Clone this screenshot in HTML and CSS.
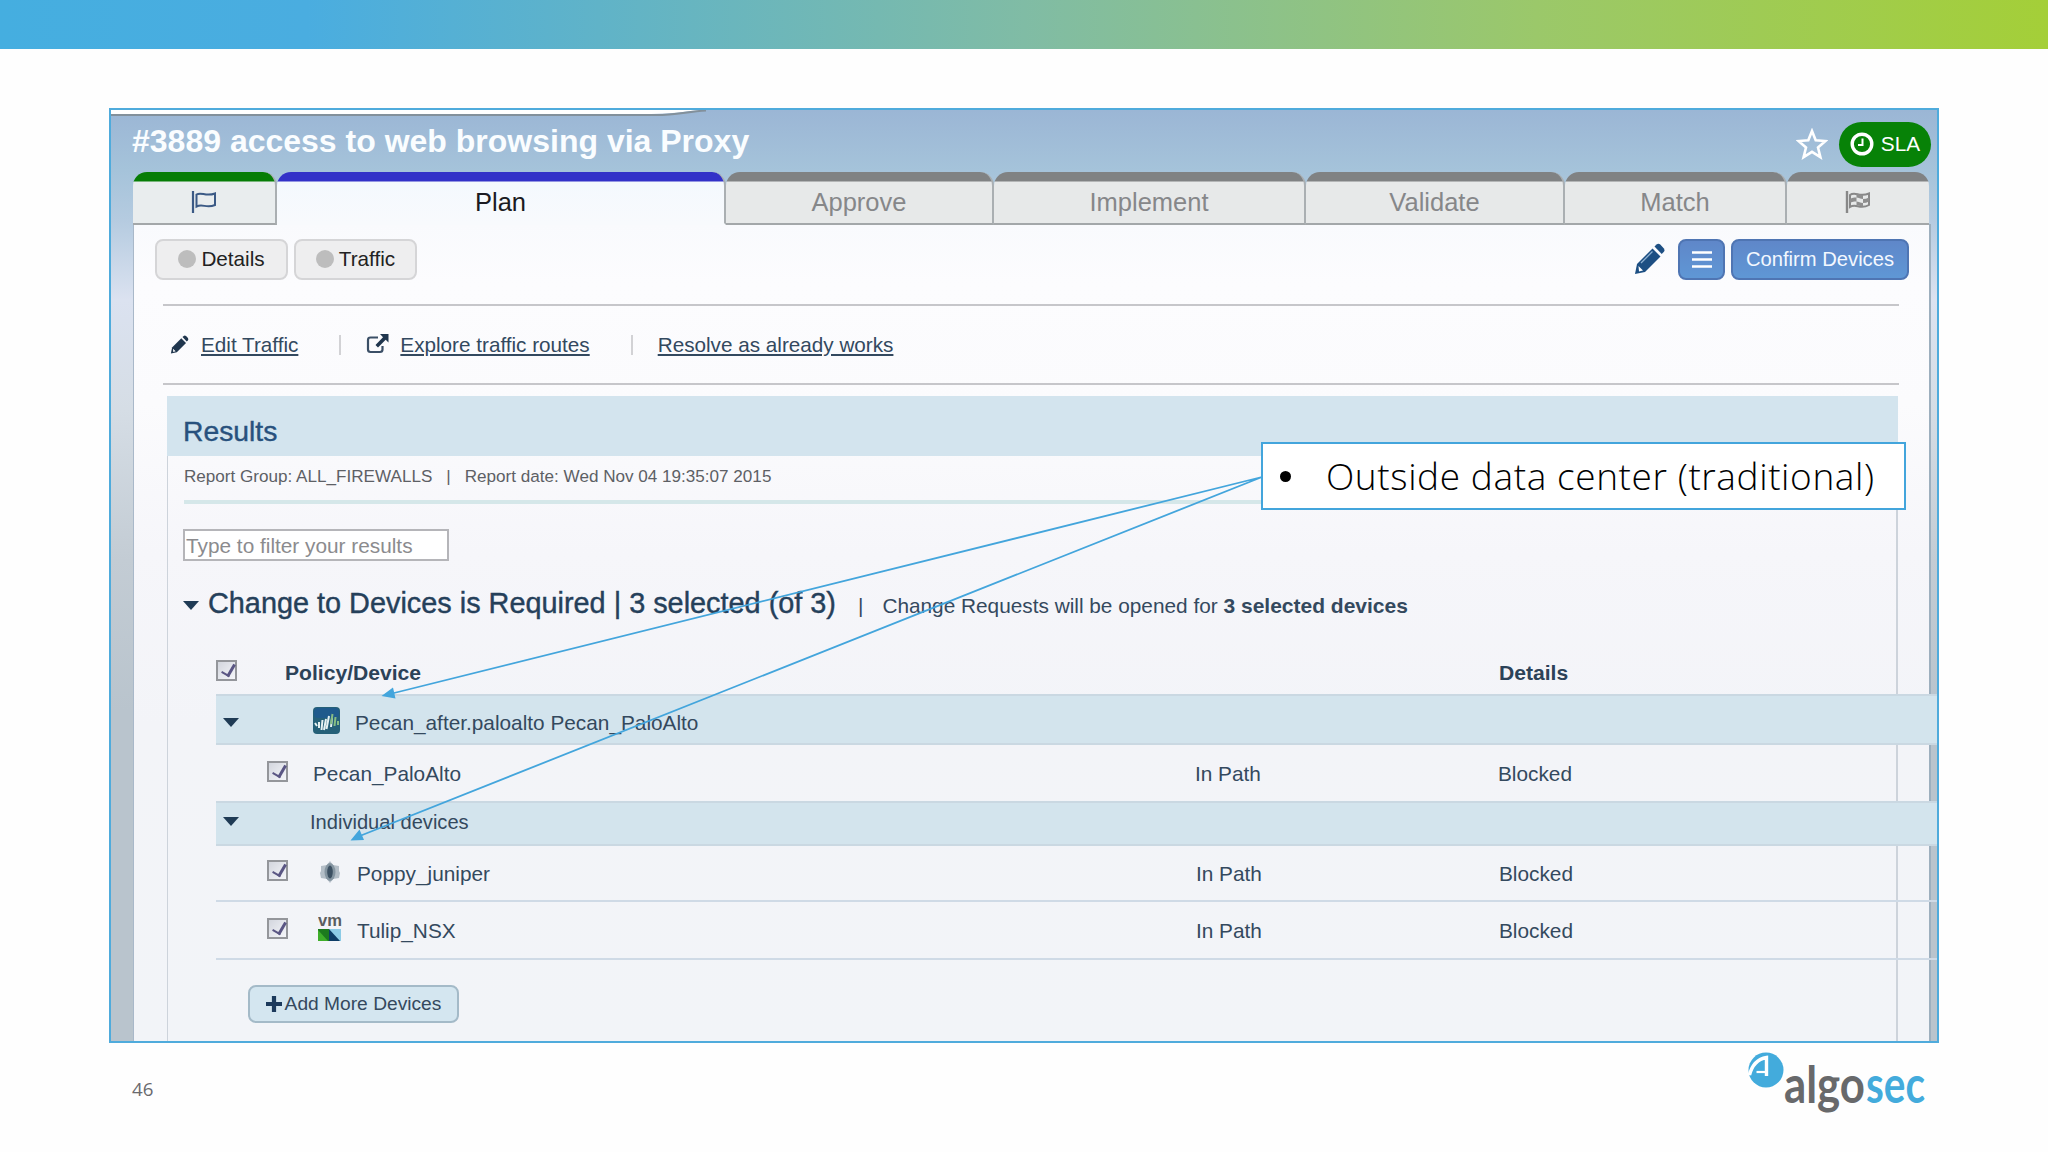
FILE: index.html
```html
<!DOCTYPE html>
<html lang="en">
<head>
    <meta charset="UTF-8">
    <meta name="viewport" content="width=device-width, initial-scale=1.0">
    <title>#3889 access to web browsing via Proxy</title>
    <link rel="stylesheet" href="styles.css">
</head>
<body>
    <div class="top-bar"></div>

    <main class="frame">
        <svg class="curve" width="600" height="8" viewBox="0 0 600 8">
            <path d="M0 0H592C575 1 562 4 540 4H0Z" fill="#fff"/>
            <path d="M0 5H545C566 5 576 1.500 595 .5" fill="none" stroke="#82909b" stroke-width="2"/>
        </svg>
        <header class="title-row">
            <h1>#3889 access to web browsing via Proxy</h1>
            <svg class="star" width="32" height="32" viewBox="0 0 32 32">
                <path d="M16 3l3.700 9.200 9.800.8-7.500 6.500 2.400 9.600L16 23.800l-8.400 5.300L10 19.500 2.500 13l9.800-.8z" fill="none" stroke="#fff" stroke-width="2.600"/>
            </svg>
            <div class="sla">
                <svg width="24" height="24" viewBox="0 0 24 24">
                    <circle cx="12" cy="12" r="9.800" fill="none" stroke="#fff" stroke-width="3.400"/>
                    <path d="M12.500 6.500V13H8" fill="none" stroke="#fff" stroke-width="2"/>
                </svg>
                <span>SLA</span>
            </div>
        </header>

        <nav class="tabs">
            <div class="tab done">
                <svg width="26" height="24" viewBox="0 0 26 24">
                    <path d="M2 1v22" stroke="#3b5a85" stroke-width="2.200"/>
                    <path d="M5.500 4.500c5-3 9 2.500 18.500-1v11.500c-9 4-12-2-18.500 1.500z" fill="none" stroke="#3b5a85" stroke-width="2"/>
                </svg>
            </div>
            <div class="tab active">Plan</div>
            <div class="tab">Approve</div>
            <div class="tab">Implement</div>
            <div class="tab">Validate</div>
            <div class="tab">Match</div>
            <div class="tab last">
                <svg width="26" height="24" viewBox="0 0 26 24">
                    <path d="M2 1v22" stroke="#888" stroke-width="2.400"/>
                    <path d="M5 5c5-4 9 2.500 19-1.500v11.500c-9 5-13-2-19 2z" fill="#e7e9e9" stroke="#888" stroke-width="2"/>
                    <path d="M11.500 3.500c2 0 4 1.500 6.500 1.500v4c-2.500 0-4.500-1.500-6.500-1.500zM5 9c2-1.500 4-1.500 6.500-1.500v4c-2.500 0-4.500 0-6.500 1.500zM18 9c2 0 4-.5 6-1.500v4c-2 1-4 1.500-6 1.500zM11.500 11.500c2 0 4 1.500 6.500 1.500v3.500c-2.500 0-4.500-1.500-6.500-1.500z" fill="#8e8e8e"/>
                </svg>
            </div>
        </nav>

        <section class="panel">
            <div class="toolbar">
                <button class="chip"><i class="dot"></i>Details</button>
                <button class="chip"><i class="dot"></i>Traffic</button>
                <svg class="pencil" width="31" height="32" viewBox="0 0 31 32">
                    <path d="M1 31l2-10L18.500 5.500l8 8L11 29z" fill="#1d4f83"/>
                    <path d="M20.500 3.500l2-2q2-1.500 4 .3l3.200 3.400q1.500 2 0 3.800l-2 2z" fill="#1d4f83"/>
                    <path d="M7 20L18.500 8.500" stroke="#8fb1d2" stroke-width="1.300"/>
                    <path d="M4.500 23l4.500 4.500-4 1z" fill="#fff"/>
                </svg>
                <button class="blue menu">
                    <svg width="20" height="17" viewBox="0 0 20 17">
                        <path d="M0 1.500h20M0 8.500h20M0 15.500h20" stroke="#fff" stroke-width="2.600"/>
                    </svg>
                </button>
                <button class="blue confirm">Confirm Devices</button>
            </div>

            <div class="links">
                <svg class="edit-icon" width="19" height="19" viewBox="0 0 31 32">
                    <path d="M1 31l2-10L18.500 5.500l8 8L11 29z" fill="#20364e"/>
                    <path d="M20.500 3.500l2-2q2-1.500 4 .3l3.200 3.400q1.500 2 0 3.800l-2 2z" fill="#20364e"/>
                    <path d="M4.500 23l4.500 4.500-4 1z" fill="#fff"/>
                </svg>
                <a href="#">Edit Traffic</a>
                <span class="sep"></span>
                <svg class="open-icon" width="23" height="20" viewBox="0 0 23 20">
                    <path d="M12 3.500H4.500Q2 3.500 2 6v9.500Q2 18 4.500 18H14q2.500 0 2.500-2.500V12" fill="none" stroke="#3b4f66" stroke-width="2.200"/>
                    <path d="M14 0h8.500v8.500L19.700 5.700 12 13.500 9.500 11l7.500-7.800z" fill="#20364e"/>
                </svg>
                <a href="#">Explore traffic routes</a>
                <span class="sep"></span>
                <a href="#">Resolve as already works</a>
            </div>

            <div class="results">
                <h2>Results</h2>
                <p class="report">Report Group: ALL_FIREWALLS<span>|</span>Report date: Wed Nov 04 19:35:07 2015</p>
                <div class="rule"></div>
                <input class="filter" type="text" placeholder="Type to filter your results">

                <div class="summary">
                    <i class="arrow"></i>
                    <h3>Change to Devices is Required | 3 selected (of 3)</h3>
                    <span class="bar">|</span>
                    <p>Change Requests will be opened for <b>3 selected devices</b></p>
                </div>

                <div class="table">
                    <div class="row head">
                        <div class="name"><span class="check"></span><b>Policy/Device</b></div>
                        <div class="path"></div>
                        <div class="state"><b>Details</b></div>
                    </div>
                    <div class="row band policy">
                        <i class="arrow"></i>
                        <svg width="27" height="27" viewBox="0 0 27 27">
                            <rect width="27" height="27" rx="4" fill="#256078"/>
                            <rect x="1" y="1" width="25" height="10" rx="4" fill="#1f5a8c"/>
                            <path d="M2 16l2 3M6 15v6M9.500 13l-1 10M13 12l-2 11M16 9l-2.500 13M19 11l-1 9" stroke="#e6f2f2" stroke-width="2"/>
                            <path d="M19.500 7l-1.500 10M22.500 10l-1 9M25 14v4" stroke="#86bd85" stroke-width="2"/>
                        </svg>
                        <span>Pecan_after.paloalto Pecan_PaloAlto</span>
                    </div>
                    <div class="row sub pecan">
                        <div class="name"><span class="check"></span><span>Pecan_PaloAlto</span></div>
                        <div class="path">In Path</div>
                        <div class="state">Blocked</div>
                    </div>
                    <div class="row band single">
                        <i class="arrow"></i>
                        <span>Individual devices</span>
                    </div>
                    <div class="row sub juniper">
                        <div class="name">
                            <span class="check"></span>
                            <svg width="24" height="24" viewBox="0 0 24 24">
                                <path d="M12 1l3 4 6 1v5l1 2-1 5-6 1-3 4-3-4-6-1-1-5 1-2V6l6-1z" fill="#b4bec7"/>
                                <ellipse cx="12" cy="12" rx="5.500" ry="9" fill="#8595a1"/>
                                <ellipse cx="12" cy="12" rx="2.800" ry="6.500" fill="#3c5062"/>
                            </svg>
                            <span>Poppy_juniper</span>
                        </div>
                        <div class="path">In Path</div>
                        <div class="state">Blocked</div>
                    </div>
                    <div class="row sub nsx">
                        <div class="name">
                            <span class="check"></span>
                            <svg width="24" height="24" viewBox="0 0 24 24">
                                <text x="0" y="9" textLength="24" lengthAdjust="spacingAndGlyphs" class="vm">vm</text>
                                <rect y="12" width="11" height="12" fill="#1c7a1e"/>
                                <path d="M0 13l10 11H0z" fill="#3fae2a"/>
                                <rect x="11" y="12" width="12" height="12" fill="#8ccbe6"/>
                                <path d="M11 12l11 12H11z" fill="#0d3c66"/>
                            </svg>
                            <span>Tulip_NSX</span>
                        </div>
                        <div class="path">In Path</div>
                        <div class="state">Blocked</div>
                    </div>
                </div>

                <button class="add">
                    <svg width="16" height="16" viewBox="0 0 16 16">
                        <path d="M8 0v16M0 8h16" stroke="#1c3a5c" stroke-width="4.200"/>
                    </svg>
                    Add More Devices
                </button>
            </div>
        </section>
    </main>

    <footer class="footer">
        <span class="page">46</span>
        <svg class="logo" width="182" height="72" viewBox="0 0 182 72">
            <circle cx="18" cy="18" r="17.500" fill="#43abdc"/>
            <path d="M1.500 23C4 13 10 7 18.500 5.500V24" fill="none" stroke="#fff" stroke-width="3.400"/>
            <path d="M8.500 20H18" stroke="#fff" stroke-width="2.200"/>
            <text x="36" y="51" textLength="81" lengthAdjust="spacingAndGlyphs" class="brand">algo</text>
            <text x="118" y="51" textLength="59" lengthAdjust="spacingAndGlyphs" class="brand sec">sec</text>
        </svg>
    </footer>

    <!-- callout and its two arrows, drawn over the panel -->
    <svg class="arrows" width="2048" height="1152" viewBox="0 0 2048 1152">
        <path d="M1262 477L392 693.500M1262 477L361 835.500" stroke="#43a5dc" stroke-width="1.800"/>
        <path d="M381.500 696l11.500-8.500 2.500 11zM350.500 840.500l9-11 4.500 10.500z" fill="#43a5dc"/>
    </svg>
    <ul class="callout">
        <li>Outside data center (traditional)</li>
    </ul>
</body>
</html>
```
FILE: styles.css
```css
* {
    box-sizing: border-box;
}

body {
    margin: 0;
    width: 2048px;
    height: 1152px;
    overflow: hidden;
    position: relative;
    background-color: #fefefe;
    font-family: "Liberation Sans", Arial, sans-serif;
    font-size: 20.8px;
    color: #34495e;
}

h1, h2, h3, p, ul {
    margin: 0;
    padding: 0;
    font-weight: normal;
}

svg {
    display: block;
    flex: none;
}

button {
    display: flex;
    align-items: center;
    justify-content: center;
    padding: 0;
    font-family: inherit;
    font-size: 20.7px;
}

.top-bar {
    height: 49px;
    background: linear-gradient(90deg, #45aee0 0%, #4aade0 15%, #80bca5 50%, #9bc86a 75%, #a4cf38 100%);
}

.frame {
    position: relative;
    width: 1830px;
    height: 935px;
    margin: 59px 0 0 109px;
    border: 2px solid #4fabdc;
    overflow: hidden;
    background: linear-gradient(180deg, #9bb6d5 0, #a5c3da 60px, #b5cbe0 110px, #dbe2f0 190px, #d5dde5 300px, #c3ccd4 450px, #b9c4cd 600px, #b9c4cd 100%);
}

.curve {
    position: absolute;
    left: 0;
    top: 0;
}

.title-row {
    display: flex;
    height: 62px;
    padding-left: 21px;
    padding-right: 6px;
}

.title-row h1 {
    flex: 1;
    font-size: 32px;
    font-weight: bold;
    line-height: 62px;
    color: #fafdff;
}

.star {
    margin: 18px 11px 0 0;
}

.sla {
    display: flex;
    align-items: center;
    justify-content: center;
    gap: 7px;
    width: 92px;
    height: 45px;
    margin-top: 12px;
    padding-bottom: 2px;
    border-radius: 23px;
    background-color: #078207;
    color: #fff;
}

.tabs {
    display: grid;
    grid-template-columns: 144px 449px 268px 312px 259px 222px 142px;
    height: 52px;
    margin-left: 22px;
}

.tab {
    display: flex;
    align-items: center;
    justify-content: center;
    padding-top: 9px;
    border-right: 2px solid #aaafb2;
    border-bottom: 2px solid #a3a7a9;
    border-radius: 14px 14px 0 0;
    background: linear-gradient(180deg, #808283 9px, #e7e9e9 10px);
    font-size: 25.5px;
    line-height: 42px;
    color: #868789;
}

.tab.done {
    background: linear-gradient(180deg, #067d06 9px, #e9edee 10px);
}

.tab.active {
    border-bottom-color: #f8fafd;
    background: linear-gradient(180deg, #3331c8 9px, #f4f9fe 10px, #f8fafd 100%);
    color: #1b1b22;
}

.tab.last {
    border-right: 0;
}

.panel {
    width: 1798px;
    height: 820px;
    margin-left: 22px;
    padding-top: 15px;
    border-left: 1px solid #a9b8c9;
    border-right: 2px solid #9dafbe;
    background: linear-gradient(180deg, #f9fafd 0, #fcfcfe 60px, #fbfbfd 180px, #f6f6fa 330px, #f3f4f8 500px, #f2f4f8 100%);
}

.toolbar {
    display: flex;
    height: 65px;
    padding-left: 21px;
    padding-right: 20px;
}

.chip {
    height: 41px;
    width: 133px;
    margin-right: 6px;
    padding-bottom: 2px;
    gap: 5px;
    border: 2px solid #d5d5d7;
    border-radius: 8px;
    background-color: #eeeeef;
    color: #222;
}

.chip + .chip {
    width: 123px;
}

.dot {
    width: 18px;
    height: 18px;
    border-radius: 50%;
    background-color: #bdbdbd;
}

.pencil {
    margin: 4px 13px 0 auto;
}

.blue {
    height: 41px;
    border: 2px solid #4f75b3;
    border-radius: 8px;
    background: linear-gradient(180deg, #5f87c9, #5f97d5);
    color: #f3f8ff;
}

.menu {
    width: 47px;
    margin-right: 6px;
}

.confirm {
    width: 178px;
    font-size: 20.2px;
}

.links {
    display: flex;
    align-items: center;
    height: 81px;
    width: 1736px;
    margin-left: 29px;
    padding-left: 7px;
    border-top: 2px solid #c6c6ca;
    border-bottom: 2px solid #c6c6ca;
}

.links a {
    font-size: 20.7px;
    color: #33495f;
    text-decoration-thickness: 1.5px;
    text-underline-offset: 2px;
}

.edit-icon {
    margin-right: 12px;
}

.sep {
    width: 2px;
    height: 20px;
    margin: 0 25px 0 41px;
    background-color: #d2d2d5;
}

.open-icon {
    margin: 0 11px 2px 0;
}

.results {
    width: 1731px;
    height: 700px;
    margin: 11px 0 0 33px;
    border-left: 1px solid #cdd3db;
    border-right: 2px solid #cdd3db;
}

.results h2 {
    height: 60px;
    margin: 0 -2px 0 -1px;
    padding: 9px 0 0 16px;
    background-color: #d3e4ee;
    font-size: 28.3px;
    line-height: 52px;
    color: #28517d;
    -webkit-text-stroke: 0.4px #28517d;
}

.report {
    height: 44px;
    padding-left: 16px;
    font-size: 17.1px;
    line-height: 42px;
    color: #5d6065;
}

.report span {
    margin: 0 14px;
}

.rule {
    height: 4px;
    margin: 0 16px;
    background-color: #d5e7e9;
}

.filter {
    display: block;
    width: 266px;
    height: 32px;
    margin: 25px 0 0 15px;
    padding: 1px 0 0 1px;
    border: 2px solid #b5b5b9;
    background-color: #fff;
    font-family: inherit;
    font-size: 20.8px;
}

.filter::placeholder {
    color: #8b8b8e;
}

.summary {
    display: flex;
    height: 46px;
    margin-top: 19px;
    padding-left: 15px;
    line-height: 47px;
}

.arrow {
    flex: none;
    width: 16px;
    height: 9px;
    background-color: #1f3b55;
    clip-path: polygon(0 0, 100% 0, 50% 100%);
}

.summary .arrow {
    margin: 21px 9px 0 0;
}

.summary h3 {
    font-size: 28.85px;
    color: #25405a;
    -webkit-text-stroke: 0.4px #25405a;
}

.summary p, .bar {
    line-height: 52px;
}

.bar {
    margin: 0 19px 0 22px;
}

.summary b {
    font-size: 21px;
}

.table {
    margin-left: 48px;
    margin-right: -41px;
}

.row {
    display: flex;
    align-items: center;
}

.name {
    display: flex;
    align-items: center;
    width: 979px;
}

.path {
    width: 303px;
}

.check {
    position: relative;
    flex: none;
    width: 21px;
    height: 21px;
    border: 2px solid #94969b;
    background: linear-gradient(135deg, #d3d6de, #f5f6fa);
}

.check::after {
    content: "";
    position: absolute;
    left: 6px;
    top: 0;
    width: 6px;
    height: 12px;
    border: solid #5a5684;
    border-width: 0 3px 2px 0;
    transform: rotate(30deg);
}

.head {
    height: 68px;
    padding-top: 26px;
    font-size: 21.1px;
    color: #2c4258;
}

.head .check {
    margin: 0 48px 5px 0;
}

.head .state {
    padding-left: 1px;
}

.band {
    border-top: 2px solid #cad8e2;
    border-bottom: 2px solid #cad8e2;
    background-color: #d3e4ed;
}

.band .arrow {
    margin-left: 7px;
}

.policy {
    height: 51px;
    padding-top: 6px;
}

.policy .arrow {
    margin-right: 74px;
}

.policy svg {
    margin: 0 15px 4px 0;
}

.single {
    height: 45px;
    font-size: 20.1px;
}

.single .arrow {
    margin: 0 71px 4px 7px;
}

.single span {
    margin-bottom: 2px;
}

.sub .check {
    margin: 0 25px 6px 51px;
}

.pecan {
    height: 56px;
    padding-top: 2px;
}

.juniper {
    height: 56px;
    padding-top: 1px;
    border-bottom: 2px solid #cfdae6;
}

.nsx {
    height: 58px;
    padding-top: 2px;
    border-bottom: 2px solid #cfdae6;
}

.juniper svg {
    margin: 0 15px 3px 4px;
}

.nsx svg {
    margin: 0 15px 4px 4px;
}

.juniper .check, .nsx .check {
    margin-right: 26px;
}

.juniper .path, .juniper .state, .nsx .path, .nsx .state {
    padding-left: 1px;
}

.vm {
    font-size: 17px;
    font-weight: bold;
    fill: #5a5d60;
}

.add {
    width: 211px;
    height: 38px;
    margin: 25px 0 0 80px;
    gap: 3px;
    border: 2px solid #a4bac8;
    border-radius: 8px;
    background-color: #d4e6f0;
    font-size: 19.2px;
    color: #34495e;
}

.footer {
    display: flex;
    justify-content: space-between;
    padding: 9px 118px 0 132px;
}

.page {
    margin-top: 23px;
    font-family: "Open Sans", sans-serif;
    font-size: 18.7px;
    line-height: 28px;
    color: #6a6a6e;
}

.brand {
    font-family: Lato, sans-serif;
    font-size: 52px;
    font-weight: bold;
    fill: #68696b;
}

.brand.sec {
    fill: #43abdc;
}

.arrows {
    position: absolute;
    left: 0;
    top: 0;
}

.callout {
    position: absolute;
    left: 1261px;
    top: 442px;
    width: 645px;
    height: 68px;
    display: flex;
    align-items: center;
    border: 2px solid #43a5dc;
    background-color: #fff;
    list-style: none;
    font-family: "Open Sans", sans-serif;
    font-weight: 300;
    font-size: 37px;
    line-height: 64px;
    color: #000;
    white-space: nowrap;
}

.callout li {
    display: flex;
    align-items: center;
    letter-spacing: 0.6px;
}

.callout li::before {
    content: "";
    width: 11px;
    height: 11px;
    margin: 0 35px 0 17px;
    border-radius: 50%;
    background-color: #000;
}
```
